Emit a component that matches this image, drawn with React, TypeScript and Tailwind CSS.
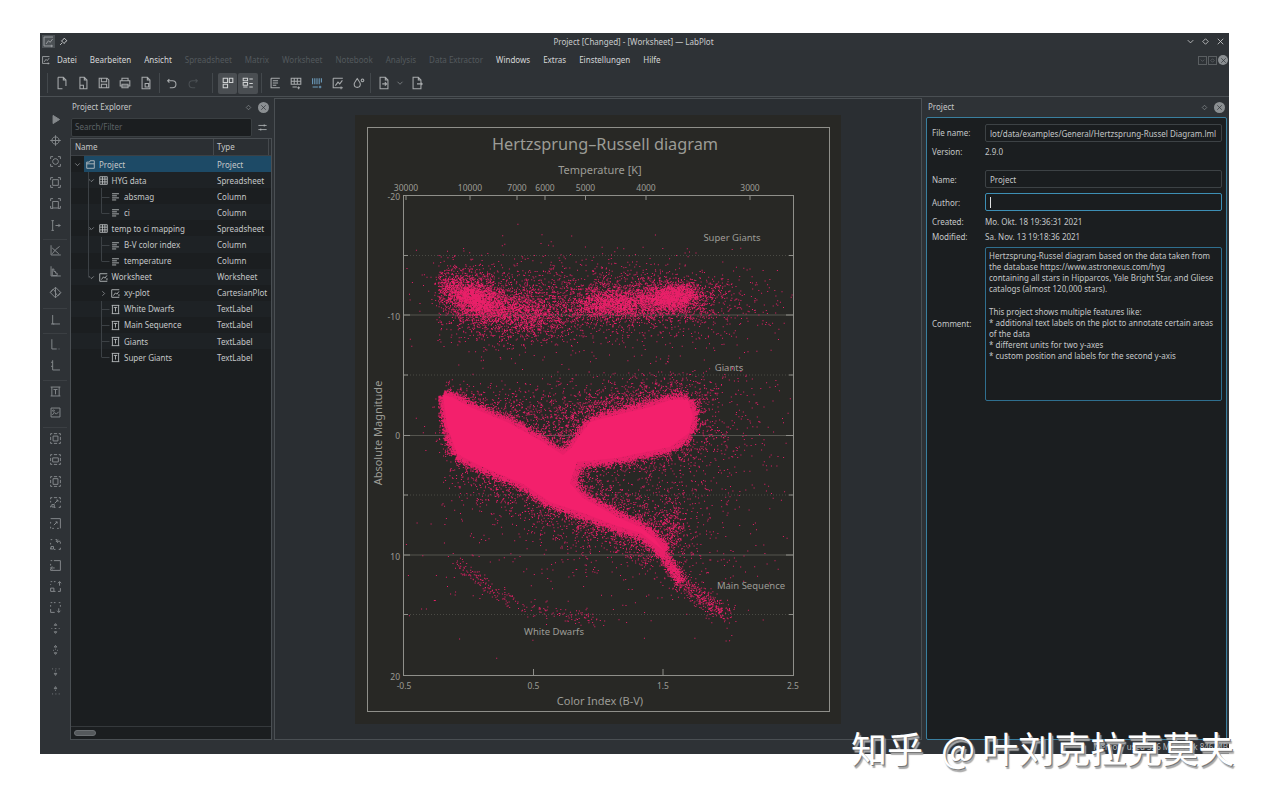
import React from "react";

// seeded random so the scatter is the same on every load
let seed = 20211113;
function rnd() {
  seed = (seed + 0x6d2b79f5) | 0;
  let t = Math.imul(seed ^ (seed >>> 15), 1 | seed);
  t = (t + Math.imul(t ^ (t >>> 7), 61 | t)) ^ t;
  return ((t ^ (t >>> 14)) >>> 0) / 4294967296;
}
function gauss() {
  return Math.sqrt(-2 * Math.log(rnd() + 1e-9)) * Math.cos(2 * Math.PI * rnd());
}

const CORE: [number, number][] = [
  [443, 394], [452, 396], [470, 406], [507, 421], [543, 441], [563, 454], [572, 446], [578, 437],
  [590, 421], [620, 413], [650, 406], [670, 399], [688, 399], [693, 415], [689, 432], [670, 446], [617, 457],
  [577, 461], [570, 482], [583, 497], [617, 516], [640, 526], [655, 538], [664, 550],
  [655, 543], [641, 532], [617, 525], [583, 512], [550, 501], [523, 483], [483, 466],
  [457, 453], [447, 425],
];

function buildDots() {
  const parts: string[] = [];
  const dot = (x: number, y: number) => {
    if (x < 405 || x > 792 || y < 196 || y > 673) return;
    // almost nothing left of the hot edge
    if (x < 438 && y < 520 && rnd() > 0.12) return;
    parts.push(`M${x.toFixed(1)} ${y.toFixed(1)}h1v1h-1z`);
  };
  // fuzz around the dense core
  for (let i = 0; i < CORE.length; i++) {
    const [ax, ay] = CORE[i];
    const [bx, by] = CORE[(i + 1) % CORE.length];
    const len = Math.hypot(bx - ax, by - ay);
    const nx = -(by - ay) / len;
    const ny = (bx - ax) / len;
    const count = Math.round(len * 34);
    for (let k = 0; k < count; k++) {
      const t = rnd();
      const tight = rnd() < 0.85;
      const off = gauss() * (tight ? 3.2 : 12);
      dot(ax + (bx - ax) * t + nx * off, ay + (by - ay) * t + ny * off);
    }
  }
  // clouds: cx, cy, sx, sy, tilt, n
  const clouds: number[][] = [
    [474, 297, 17, 8, 0.35, 2000],
    [470, 298, 24, 15, 0.3, 1300],
    [522, 310, 22, 12, 0.2, 1300],
    [610, 302, 20, 7, -0.02, 1300],
    [672, 296, 15, 7, -0.1, 1900],
    [640, 300, 36, 11, -0.05, 1500],
    [560, 300, 90, 22, 0, 2000],
    [705, 305, 30, 16, 0, 220],
    [565, 420, 55, 18, 0, 1100],
    [640, 400, 45, 12, -0.15, 800],
    [555, 500, 70, 28, 0.35, 800],
    [620, 530, 60, 18, 0.3, 400],
    [674, 525, 6, 12, 0, 220],
    [660, 505, 30, 18, 0, 240],
    [690, 440, 40, 30, 0, 500],
    [590, 440, 130, 70, 0, 350],
    [600, 560, 100, 35, 0, 60],
  ];
  for (const [cx, cy, sx, sy, tilt, n] of clouds) {
    for (let k = 0; k < n; k++) {
      const u = gauss() * sx;
      const v = gauss() * sy;
      dot(cx + u, cy + v + u * tilt);
    }
  }
  // tail of the main sequence
  for (let k = 0; k < 1100; k++) {
    const t = rnd();
    dot(655 + t * 25 + gauss() * 3.4, 540 + t * 40 + gauss() * 2.6);
  }
  for (let k = 0; k < 380; k++) {
    const t = rnd();
    dot(680 + t * 46 + gauss() * 6, 580 + t * 34 + gauss() * 4.5);
  }
  // white dwarfs
  const wd: [number, number][] = [[455, 562], [475, 575], [490, 590], [525, 605], [565, 613], [600, 620]];
  for (let i = 0; i < wd.length - 1; i++) {
    for (let k = 0; k < 44; k++) {
      const t = rnd();
      dot(wd[i][0] + (wd[i + 1][0] - wd[i][0]) * t + gauss() * 4.5, wd[i][1] + (wd[i + 1][1] - wd[i][1]) * t + gauss() * 4);
    }
  }
  // thin scatter over the whole plot
  for (let k = 0; k < 200; k++) dot(405 + rnd() * 387, 260 + rnd() * 380);
  return parts.join("");
}

const DOTS = buildDots();
const COREPTS = CORE.map((p) => p.join(",")).join(" ");

function Plot() {
  const minor = [254.5, 374, 494, 613.5];
  const major = [314, 434.5, 554];
  const topTicks: [string, number][] = [
    ["30000", 406], ["10000", 470], ["7000", 517], ["6000", 545], ["5000", 585.5], ["4000", 646], ["3000", 750],
  ];
  return (
    <svg width="486" height="609" viewBox="355 114 486 609" className="block shrink-0 fill-[#9c9c96]">
      <rect x="355" y="114" width="486" height="609" className="fill-[#282825] stroke-none" />
      <rect x="367.5" y="126.5" width="462" height="584" className="fill-none stroke-[#8f8f8a]" />
      {minor.map((y) => (
        <g key={y}>
          <line x1="404" x2="793" y1={y} y2={y} strokeDasharray="1 2" className="stroke-[#4a4a44]" />
          <line x1="404" x2="408" y1={y} y2={y} className="stroke-[#8f8f8a]" />
          <line x1="789" x2="793" y1={y} y2={y} className="stroke-[#8f8f8a]" />
        </g>
      ))}
      {major.map((y) => (
        <g key={y}>
          <line x1="404" x2="793" y1={y} y2={y} className="stroke-[#55554f]" />
          <line x1="404" x2="410" y1={y} y2={y} className="stroke-[#8f8f8a]" />
          <line x1="786" x2="793" y1={y} y2={y} className="stroke-[#8f8f8a]" />
        </g>
      ))}
      <path d={DOTS} className="fill-[#e81f68]" />
      <polygon points={COREPTS} className="fill-[#f3206c]" />
      <rect x="403.5" y="194.5" width="390" height="480" className="fill-none stroke-[#8f8f8a]" />
      {topTicks.map(([t, x]) => (
        <g key={t}>
          <line x1={x} x2={x} y1="194" y2="199" className="stroke-[#8f8f8a]" />
          <text x={x} y="190" textAnchor="middle" fontSize="8.5">{t}</text>
        </g>
      ))}
      <line x1="533.5" x2="533.5" y1="668" y2="674" className="stroke-[#8f8f8a]" />
      <line x1="663" x2="663" y1="668" y2="674" className="stroke-[#8f8f8a]" />
      <text x="400" y="199" textAnchor="end" fontSize="8.5">-20</text>
      <text x="400" y="319" textAnchor="end" fontSize="8.5">-10</text>
      <text x="400" y="438" textAnchor="end" fontSize="8.5">0</text>
      <text x="400" y="559" textAnchor="end" fontSize="8.5">10</text>
      <text x="400" y="679" textAnchor="end" fontSize="8.5">20</text>
      <text x="404" y="688" textAnchor="middle" fontSize="8.5">-0.5</text>
      <text x="533.5" y="688" textAnchor="middle" fontSize="8.5">0.5</text>
      <text x="663" y="688" textAnchor="middle" fontSize="8.5">1.5</text>
      <text x="793" y="688" textAnchor="middle" fontSize="8.5">2.5</text>
      <text x="605" y="149" textAnchor="middle" fontSize="16.3">Hertzsprung–Russell diagram</text>
      <text x="600" y="173" textAnchor="middle" fontSize="11">Temperature [K]</text>
      <text x="600" y="704" textAnchor="middle" fontSize="11">Color Index (B-V)</text>
      <text x="0" y="0" textAnchor="middle" fontSize="11" transform="translate(382 432) rotate(-90)">Absolute Magnitude</text>
      <text x="732" y="240" textAnchor="middle" fontSize="9.5">Super Giants</text>
      <text x="729" y="370" textAnchor="middle" fontSize="9.5">Giants</text>
      <text x="751" y="588" textAnchor="middle" fontSize="9.5">Main Sequence</text>
      <text x="554" y="634" textAnchor="middle" fontSize="9.5">White Dwarfs</text>
    </svg>
  );
}

// small line icons, all on a 16 unit grid
const P: Record<string, string> = {
  file: "M3.5 1.5h6l3 3v7M9.5 1.5v3h3M3.5 1.5v13h5",
  fileOpen: "M4.5 1.5h5l3 3v10h-8zM9.5 1.5v3h3M4.5 10.5h4v4",
  save: "M2.5 2.5h9l2 2v9h-11zM5 2.5v4h6v-4M5 13.5v-4h6v4",
  print: "M4.5 5.5v-3h7v3M2.5 5.5h11v6h-11zM4.5 9.5h7v4h-7z",
  preview: "M3.5 1.5h6l3 3v10h-9zM9.5 1.5v3h3M7 8.5h4v4h-4z",
  undo: "M5 3.5l-2 2 2 2M3.5 5.5h5a3.5 3.5 0 0 1 0 8h-3",
  redo: "M11 3.5l2 2-2 2M12.5 5.5h-5a3.5 3.5 0 0 0 0 8h3",
  tile: "M2.5 2.5h5v5h-5zM9.5 2.5h4v5h-4zM2.5 9.5h5v4h-5z",
  list: "M2.5 2.5h5v3h-5zM9.5 3.5h4M2.5 7.5h5v3h-5zM9.5 8.5h4M2.5 12.5h5M9.5 12.5h4",
  wb: "M3.5 2.5h10M3.5 2.5v11h10M5.5 5.5h6M5.5 8h6M5.5 10.5h4",
  sheet: "M2.5 2.5h11v7h-11zM6 2.5v7M9.5 2.5v7M2.5 6h11M4 12.5h5M11 12v3M9.5 13.5h3",
  matrix: "M3 2.5v7M5.5 2.5v7M8 2.5v7M10.5 2.5v7M13 2.5v5M3 12.5h6M11.5 11v3M10 12.5h3",
  chart: "M2.5 2.5v11h11M2.5 2.5h11M5 11l3-4 2 2 3-4M11.5 12v3",
  drop: "M6 3c2 3 3.5 4.5 3.5 6.5a3.5 3.5 0 0 1-7 0C2.5 7.5 4 6 6 3zM12 3.5a1.5 1.5 0 1 0 .01 0",
  imp: "M3.5 1.5h6l3 3v10h-9zM9.5 1.5v3h3M6 9h5M9 7l2 2-2 2",
  exp: "M3.5 1.5h6l3 3v10h-9zM9.5 1.5v3h3M8 9h6M12 7l2 2-2 2",
  chev: "M4 6l4 4 4-4",
  chevR: "M6 4l4 4-4 4",
  diamond: "M8 4l4 4-4 4-4-4z",
  x: "M4 4l8 8M12 4l-8 8",
  pin: "M9 3l4 4-2 1-2 3-4-4 3-2zM6 10l-3 3",
  filter: "M2 5h12M2 11h12M10.5 3.5v3M5.5 9.5v3",
  cursor: "M5 3v10l8-5z",
  cross: "M8 1.5v13M1.5 8h13M8 3.5a4.5 4.5 0 1 0 .01 0",
  z1: "M2 5V2h3M11 2h3v3M14 11v3h-3M5 14H2v-3M8 4.5a3.5 3.5 0 1 0 .01 0",
  z2: "M2 5V2h3M11 2h3v3M14 11v3h-3M5 14H2v-3M4.5 4.5h7v7h-7z",
  z3: "M2 5V2h3M11 2h3v3M14 11v3h-3M5 14H2v-3M4.5 5.5h7v8h-7z",
  cursorLine: "M3 2h3M3 14h3M4.5 2v12M8 8h6M11.5 6l2 2-2 2",
  curve: "M2.5 1.5v12h12M4 12l4-5 5-4M4 5l8 7",
  hist: "M2.5 1.5v12h12M4 13V5h2v3h2v2h2v3z",
  fit: "M8 1.5l6.5 6.5-6.5 6.5-6.5-6.5zM2 8c2-5 4-5 6 0s4 5 6 0M8 1.5v13",
  axis: "M4.5 2.5v11h9M2.5 13.5h4",
  axisH: "M3.5 1.5v12h6M11 13.5h.5M13 13.5h.5",
  axisV: "M4.5 1.5v12h9M2.5 4h2M2.5 9h2",
  label: "M2 2.5h12M2 13.5h12M3.5 2.5v11M12.5 2.5v11M5.5 5.5h5M8 5.5v6",
  image: "M2.5 2.5h11v11h-11zM4 11l3-3 2 2 3-3M5.5 5a1 1 0 1 0 .01 0",
  d1: "M2 2h2M6 2h4M12 2h2v2M14 6v4M14 12v2h-2M10 14H6M4 14H2v-2M2 10V6M2 4V2M5 5h6v6H5z",
  d2: "M2 2h2M6 2h4M12 2h2v2M14 6v4M14 12v2h-2M10 14H6M4 14H2v-2M2 10V6M2 4V2M4.5 6h7v5h-7z",
  d3: "M2 2h2M6 2h4M12 2h2v2M14 6v4M14 12v2h-2M10 14H6M4 14H2v-2M2 10V6M2 4V2M5 4.5h6v7H5z",
  d4: "M2 2h2M6 2h4M12 2h2v2M14 6v2M14 12v2h-2M8 14H6M2 14v-2M2 8V6M2 4V2M7 9l4-4M9 5h2v2M3.5 10.5h3v3h-3z",
  d5: "M2 2h12v12M12 14h-2M6 14H4M2 14v-2M2 8V6M6 10l4-4M8 6h2v2",
  d6: "M2 2h2M8 2h2M14 5v2M14 12v2h-2M8 14H6M2 14v-2M2 8V6M9 4h5M11 2l-2 2 2 2M2.5 10.5h3v3h-3z",
  d7: "M2 2h2M6 2h8v12H2M2 8V6M2 14v-2M7 11H2M4 9l-2 2 2 2",
  d8: "M2 2h2M6 2h2M13 2v5M11 4l2-2 2 2M14 10v4h-3M8 14H2v-4h4v4M2 6V5",
  d9: "M2 2h2M6 2h2M12 2h2M2 5v2M14 5v2M2 10v4h5M12 9v5M10 12l2 2 2-2",
  a1: "M8 2l-1.5 2h3zM8 14l-1.5-2h3zM7 8h2M3 8h1M12 8h1",
  a2: "M8 3l-1.5 2h3zM5 9h1M10 9h1M8 14l-1.5-2h3zM8 7v1",
  a3: "M4 6h1M8 6h1M12 6h1M8 14l-1.5-2.5h3zM8 8v1",
  a4: "M8 2l-1.5 2.5h3zM4 11h1M8 11h1M12 11h1M8 6v1",
  folder: "M2.5 4.5h4l1-2h6v11h-11zM2.5 7h11",
  grid: "M2.5 2.5h11v11h-11zM2.5 6h11M2.5 10h11M6.5 2.5v11M10 2.5v11",
  column: "M3 4h10M3 7h7M3 10h10M3 13h6",
  work: "M2.5 2.5h11M2.5 2.5v11h11M5 11l3-4 2 2 3-4M13 9v3",
  text: "M2.5 2h11M2.5 14h11M3.5 2v12M12.5 2v12M5.5 5h5M8 5v6",
};

function Ico({ n, size = 14, className = "" }: { n: string; size?: number; className?: string }) {
  return (
    <svg width={size} height={size} viewBox="0 0 16 16" className={`shrink-0 stroke-current ${n === "cursor" ? "fill-current" : "fill-none"} ${className}`} strokeWidth="1.2">
      <path d={P[n]} />
    </svg>
  );
}

function CloseDot({ size = "w-[11px] h-[11px]" }: { size?: string }) {
  return (
    <span className={`${size} rounded-full bg-[#8b8f92] flex items-center justify-center text-[#2a2e32]`}>
      <Ico n="x" size={9} />
    </span>
  );
}

const sideGroups = [
  { mt: "", items: ["cursor", "cross", "z1", "z2", "z3", "cursorLine"] },
  { mt: "mt-[3px] border-t border-[#3b3f43]", items: ["curve", "hist", "fit"] },
  { mt: "mt-[5px] border-t border-[#3b3f43]", items: ["axis"] },
  { mt: "mt-[3px] border-t border-[#3b3f43]", items: ["axisH", "axisV"] },
  { mt: "mt-[4px] border-t border-[#3b3f43]", items: ["label", "image"] },
  { mt: "mt-[4px] border-t border-[#3b3f43]", items: ["d1", "d2", "d3", "d4", "d5", "d6", "d7", "d8", "d9", "a1", "a2", "a3", "a4"] },
];

const menus: [string, boolean][] = [
  ["Datei", true], ["Bearbeiten", true], ["Ansicht", true], ["Spreadsheet", false], ["Matrix", false],
  ["Worksheet", false], ["Notebook", false], ["Analysis", false], ["Data Extractor", false],
  ["Windows", true], ["Extras", true], ["Einstellungen", true], ["Hilfe", true],
];

const rows = [
  { level: 0, icon: "folder", name: "Project", type: "Project", chev: "chev" },
  { level: 1, icon: "grid", name: "HYG data", type: "Spreadsheet", chev: "chev" },
  { level: 2, icon: "column", name: "absmag", type: "Column" },
  { level: 2, icon: "column", name: "ci", type: "Column" },
  { level: 1, icon: "grid", name: "temp to ci mapping", type: "Spreadsheet", chev: "chev" },
  { level: 2, icon: "column", name: "B-V color index", type: "Column" },
  { level: 2, icon: "column", name: "temperature", type: "Column" },
  { level: 1, icon: "work", name: "Worksheet", type: "Worksheet", chev: "chev" },
  { level: 2, icon: "work", name: "xy-plot", type: "CartesianPlot", chev: "chevR" },
  { level: 2, icon: "text", name: "White Dwarfs", type: "TextLabel" },
  { level: 2, icon: "text", name: "Main Sequence", type: "TextLabel" },
  { level: 2, icon: "text", name: "Giants", type: "TextLabel" },
  { level: 2, icon: "text", name: "Super Giants", type: "TextLabel" },
];

const indents = ["w-0", "w-[12.5px]", "w-[25px]"];

function ToolBtn({ n, dim = false }: { n: string; dim?: boolean }) {
  return (
    <div className={`w-[21px] h-[21px] flex items-center justify-center ${dim ? "text-[#4a4f53]" : "text-[#a8abad]"}`}>
      <Ico n={n} />
    </div>
  );
}

function Field({ children, focus = false }: { children?: React.ReactNode; focus?: boolean }) {
  return (
    <div className={`w-[237px] h-[18px] rounded-[2px] border bg-[#1a1d1f] px-[4px] pt-px flex items-center whitespace-nowrap overflow-hidden ${focus ? "border-[#3d8fb5]" : "border-[#3d4245]"}`}>
      {children}
    </div>
  );
}

const comment = [
  "Hertzsprung-Russel diagram based on the data taken from",
  "the database https://www.astronexus.com/hyg",
  "containing all stars in Hipparcos, Yale Bright Star, and Gliese",
  "catalogs (almost 120,000 stars).",
  "\u00a0",
  "This project shows multiple features like:",
  "* additional text labels on the plot to annotate certain areas",
  "of the data",
  "* different units for two y-axes",
  "* custom position and labels for the second y-axis",
];

export default function App() {
  return (
    <div className="relative w-[1270px] h-[802px] bg-white pl-[40px] pt-[33px] overflow-hidden font-['Noto_Sans',sans-serif] text-[8px] text-[#c4c7c8]">
      <div className="w-[1189px] h-[721px] bg-[#2e3236] flex flex-col">
        {/* Title bar */}
        <div className="h-[17px] shrink-0 flex items-center relative bg-[#2f3337]">
          <div className="flex items-center pl-[2px] gap-[3px] text-[#9a9da0]">
            <Ico n="chart" size={13} className="bg-[#4c5155]" />
            <Ico n="pin" size={11} className="text-[#d5d7d8]" />
          </div>
          <div className="flex-1 text-center text-[#c9cbcc] pl-[13px]">Project [Changed] - [Worksheet] — LabPlot</div>
          <div className="flex items-center gap-[4px] pr-[3px] text-[#c9cbcc]">
            <Ico n="chev" size={11} />
            <Ico n="diamond" size={11} />
            <Ico n="x" size={11} />
          </div>
        </div>

        {/* Menu */}
        <div className="h-[20px] shrink-0 flex items-center pl-[1px]">
          <Ico n="chart" size={10} className="text-[#b4b7b9] mr-[6px]" />
          <div className="flex items-center gap-[13px]">
            {menus.map(([m, on]) => (
              <span key={m} className={on ? "text-[#d5d7d8]" : "text-[#53595d]"}>{m}</span>
            ))}
          </div>
          <div className="ml-auto flex items-center gap-[1px] pr-[1px] text-[#777b7e]">
            <span className="border border-[#5a5e61] w-[9px] h-[9px] flex items-center justify-center"><Ico n="chev" size={7} /></span>
            <span className="border border-[#5a5e61] w-[9px] h-[9px] flex items-center justify-center"><Ico n="diamond" size={7} /></span>
            <CloseDot size="w-[10px] h-[10px]" />
          </div>
        </div>

        {/* Top toolbar */}
        <div className="h-[27px] shrink-0 flex items-center pl-[7px] border-b border-[#4a4f53]">
          <div className="w-px h-[20px] bg-[#43484c] mr-[3px]" />
          {["file", "fileOpen", "save", "print", "preview"].map((n) => <ToolBtn key={n} n={n} />)}
          <div className="w-px h-[20px] bg-[#43484c] ml-[3px] mr-[1px]" />
          <ToolBtn n="undo" />
          <ToolBtn n="redo" dim />
          <div className="w-px h-[20px] bg-[#43484c] ml-[9px] mr-[5px]" />
          <div className="w-[19px] h-[21px] flex items-center justify-center rounded-[2px] bg-[#4a4e52] text-[#d0d2d3] mr-px"><Ico n="tile" /></div>
          <div className="w-[20px] h-[21px] flex items-center justify-center rounded-[2px] bg-[#4a4e52] text-[#d0d2d3]"><Ico n="list" /></div>
          <div className="w-px h-[20px] bg-[#43484c] ml-[3px] mr-[2px]" />
          <ToolBtn n="wb" />
          <ToolBtn n="sheet" />
          <div className="w-[21px] h-[21px] flex items-center justify-center text-[#6f9fc0]"><Ico n="matrix" /></div>
          <ToolBtn n="chart" />
          <ToolBtn n="drop" />
          <div className="w-px h-[20px] bg-[#43484c] ml-[1px] mr-[2px]" />
          <ToolBtn n="imp" />
          <div className="w-[12px] flex justify-center text-[#8b8f92]"><Ico n="chev" size={10} /></div>
          <ToolBtn n="exp" />
        </div>

        <div className="flex flex-1 min-h-0">
          {/* Left toolbar */}
          <div className="w-[30px] shrink-0 pt-[12px] flex flex-col items-center text-[#85898c]">
            {sideGroups.map((g, i) => (
              <div key={i} className={`flex flex-col items-center w-[24px] ${g.mt}`}>
                {g.items.map((n) => (
                  <div key={n} className="h-[21.1px] flex items-center justify-center">
                    <Ico n={n} size={13} />
                  </div>
                ))}
              </div>
            ))}
          </div>

          <div className="flex-1 flex flex-col min-w-0">
            <div className="flex flex-1 min-h-0">
              {/* Project Explorer */}
              <div className="w-[203px] shrink-0 flex flex-col">
                <div className="h-[20px] shrink-0 flex items-center pl-[2px] pr-[4px] text-[#c4c7c8]">
                  <span>Project Explorer</span>
                  <Ico n="diamond" size={9} className="ml-auto mr-[5px] text-[#8b8f92]" />
                  <CloseDot />
                </div>
                <div className="h-[20px] shrink-0 flex items-center pl-px">
                  <div className="w-[181px] h-[19px] rounded-[2px] border border-[#3a3f42] bg-[#1b1e20] flex items-center px-[3px] text-[#5d6266]">Search/Filter</div>
                  <Ico n="filter" size={11} className="ml-[5px] text-[#b4b7b9]" />
                </div>
                <div className="flex-1 min-h-0 mt-px mr-px border border-[#4a4f53] bg-[#1b1e20] flex flex-col">
                  <div className="h-[17px] shrink-0 flex items-center bg-[#2b2f33] border-b border-[#3c4044] text-[#c4c7c8]">
                    <div className="w-[143px] pl-[4px] border-r border-[#45494d] h-full flex items-center">Name</div>
                    <div className="w-[55px] pl-[3px] border-r border-[#45494d] h-full flex items-center">Type</div>
                  </div>
                  <div className="relative flex-1 min-h-0">
                    {rows.map((r, i) => (
                      <div key={r.name} className={`flex h-[16.1px] ${i % 2 ? "bg-[#1e2225]" : "bg-[#1b1e20]"}`}>
                        <div className="w-[13px] shrink-0 flex items-center justify-end text-[#a3a6a8]">
                          {r.level === 0 && <Ico n="chev" size={9} className="mr-[2px]" />}
                        </div>
                        <div className={`flex-1 flex items-center pt-px min-w-0 ${r.level === 0 ? "bg-[#1d4a66]" : ""}`}>
                          <div className="w-[133px] shrink-0 flex items-center">
                            <div className={`${indents[r.level]} shrink-0 flex justify-end text-[#a3a6a8]`}>
                              {r.level > 0 && r.chev && <Ico n={r.chev} size={9} className="mr-[1px]" />}
                            </div>
                            <Ico n={r.icon} size={11} className="text-[#c4c7c8] ml-px" />
                            <span className="ml-[3px] whitespace-nowrap">{r.name}</span>
                          </div>
                          <span className="whitespace-nowrap">{r.type}</span>
                        </div>
                      </div>
                    ))}
                    {/* tree guide lines */}
                    <svg width="60" height="210" className="absolute left-0 top-0 stroke-[#3c4145] fill-none">
                      <path d="M17.5 16V121M17.5 24.5h3M17.5 73.5h3M17.5 121.5h3M30.5 32V57M30.5 41.5h8M30.5 57.5h8M30.5 81V105M30.5 89.5h8M30.5 105.5h8M30.5 145V201M30.5 153.5h8M30.5 169.5h8M30.5 185.5h8M30.5 201.5h8" />
                    </svg>
                  </div>
                  <div className="h-[13px] shrink-0 border-t border-[#35393c] flex items-center pl-[3px]">
                    <div className="w-[22px] h-[6px] rounded-full bg-[#55595c] border border-[#6b6f72]" />
                  </div>
                </div>
              </div>

              {/* MDI area */}
              <div className="w-[648px] shrink-0 ml-px mt-px bg-[#2a2e32] border border-[#4a4f53] flex items-center justify-center">
                <Plot />
              </div>

              {/* Right dock */}
              <div className="flex-1 min-w-0 ml-[2px] flex flex-col">
                <div className="h-[20px] shrink-0 flex items-center pl-[4px] pr-[4px]">
                  <span>Project</span>
                  <Ico n="diamond" size={9} className="ml-auto mr-[5px] text-[#8b8f92]" />
                  <CloseDot />
                </div>
                <div className="flex-1 min-h-0 mx-[2px] rounded-[2px] border border-[#3a7f9f] bg-[#1b1e20] pl-[5px] pt-[6px] flex flex-col">
                  <div className="flex items-center">
                    <span className="w-[53px] shrink-0">File name:</span>
                    <Field>lot/data/examples/General/Hertzsprung-Russel Diagram.lml</Field>
                  </div>
                  <div className="flex items-center h-[16px] mt-[2px]">
                    <span className="w-[53px] shrink-0">Version:</span>
                    <span>2.9.0</span>
                  </div>
                  <div className="flex items-center mt-[10px]">
                    <span className="w-[53px] shrink-0 pt-px">Name:</span>
                    <Field>Project</Field>
                  </div>
                  <div className="flex items-center mt-[5px]">
                    <span className="w-[53px] shrink-0 pt-[2px]">Author:</span>
                    <Field focus><span className="w-px h-[11px] bg-[#e0e2e3]" /></Field>
                  </div>
                  <div className="flex items-center h-[15px] mt-[3px]">
                    <span className="w-[53px] shrink-0">Created:</span>
                    <span>Mo. Okt. 18 19:36:31 2021</span>
                  </div>
                  <div className="flex items-center h-[15px]">
                    <span className="w-[53px] shrink-0">Modified:</span>
                    <span>Sa. Nov. 13 19:18:36 2021</span>
                  </div>
                  <div className="flex items-center mt-[3px]">
                    <span className="w-[53px] shrink-0">Comment:</span>
                    <div className="w-[237px] h-[154px] rounded-[2px] border border-[#2f6f8f] bg-[#1a1d1f] px-[3px] pt-[2px] leading-[11.15px] whitespace-nowrap">
                      {comment.map((l, i) => <div key={i}>{l}</div>)}
                    </div>
                  </div>
                </div>
              </div>
            </div>

            {/* Status bar */}
            <div className="h-[14px] shrink-0 flex items-center justify-end pr-px text-[#b4b7b9]">Memory used 336 MB, peak 846 MB</div>
          </div>
        </div>
      </div>

      {/* Watermark */}
      <div className="absolute left-[851px] top-[722px] whitespace-nowrap text-[36px] leading-[50px] text-white font-['Noto_Sans_CJK_SC',sans-serif] [word-spacing:10px] [text-shadow:1px_1px_0_#777,2px_3px_1px_#aaa]">知乎 <span className="tracking-[7px]">@</span>叶刘克拉克莫夫</div>
    </div>
  );
}
